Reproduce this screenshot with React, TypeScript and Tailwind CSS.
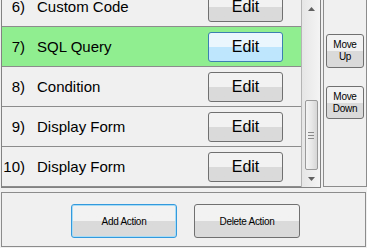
import React from 'react';

const rows = [
    {num: '6)', label: 'Custom Code'},
    {num: '7)', label: 'SQL Query', selected: true},
    {num: '8)', label: 'Condition'},
    {num: '9)', label: 'Display Form'},
    {num: '10)', label: 'Display Form'},
];

const btnBase = 'flex items-center justify-center rounded-[3px] border text-black';
const btnNormal = 'border-[#707070] bg-gradient-to-b from-[#f2f2f2] from-50% to-[#dadada] to-50%';
const btnHot = 'border-[#3c7fb1] bg-gradient-to-b from-[#eaf6fd] from-50% to-[#bee6fd] to-50%';
const btnFocus = 'border-[#3399dd] shadow-[inset_0_0_0_1px_#a8dcf5] bg-gradient-to-b from-[#f2f2f2] from-50% to-[#dadada] to-50%';

const App: React.FC = () => {
    return (
        <div className="relative w-[367px] h-[248px] overflow-hidden bg-[#f0f0f0] font-['Liberation_Sans',Arial,sans-serif]">
            <div className="flex h-[188px]">
                {/* Liste des actions */}
                <div className="ml-[1px] w-[320px] h-[188px] flex border-l border-r border-b border-[#828282] overflow-hidden">
                    <div className="w-[299px] flex flex-col -mt-[13px]">
                        {rows.map((row) => (
                            <div key={row.num}
                                 className={`h-[40px] shrink-0 flex items-center border-b border-[#8c8c8c] ${row.selected ? 'bg-[#90ee90]' : 'bg-[#f0f0f0]'}`}>
                                <span className="w-[23px] text-right text-[15px] leading-none">{row.num}</span>
                                <span className="ml-[12px] text-[15px] leading-none flex-1">{row.label}</span>
                                <div className={`${btnBase} ${row.selected ? btnHot : btnNormal} w-[75px] h-[30px] mr-[18px] text-[16px]`}>
                                    Edit
                                </div>
                            </div>
                        ))}
                    </div>
                    {/* Scrollbar */}
                    <div className="w-[19px] border-l border-[#b4b4b4] bg-gradient-to-r from-[#e6e6e6] to-[#f4f4f4] flex flex-col items-center">
                        <div className="h-[17px] flex items-center justify-center">
                            <svg width="7" height="4" viewBox="0 0 7 4"><path d="M0 4 L3.5 0 L7 4 Z" fill="#606060"/></svg>
                        </div>
                        <div className="h-[83px]"/>
                        <div className="w-[13px] h-[70px] rounded-[2px] border border-[#9a9a9a] bg-gradient-to-r from-[#f4f4f4] via-[#e8e8e8] to-[#d6d6d6] flex items-center justify-center">
                            <svg width="6" height="7" viewBox="0 0 6 7">
                                <path d="M0 0.5H6M0 3.5H6M0 6.5H6" stroke="#8a8a8a" strokeWidth="1"/>
                            </svg>
                        </div>
                        <div className="flex-1 flex items-center justify-center">
                            <svg width="7" height="4" viewBox="0 0 7 4"><path d="M0 0 L3.5 4 L7 0 Z" fill="#606060"/></svg>
                        </div>
                    </div>
                </div>
                {/* Panneau de droite */}
                <div className="ml-[2px] w-[44px] h-[187px] border-l border-r border-b border-[#8c8c8c] flex flex-col items-center">
                    <div className={`${btnBase} ${btnNormal} mt-[34px] w-[38px] h-[34px] flex-col text-[10px] leading-[12px] tracking-[-0.3px]`}>
                        <span>Move</span>
                        <span>Up</span>
                    </div>
                    <div className={`${btnBase} ${btnNormal} mt-[18px] w-[38px] h-[33px] flex-col text-[10px] leading-[12px] tracking-[-0.3px]`}>
                        <span>Move</span>
                        <span>Down</span>
                    </div>
                </div>
            </div>
            {/* Boutons du bas */}
            <div className="mt-[4px] ml-[1px] w-[365px] h-[55px] border border-[#8c8c8c] flex items-start pt-[11px]">
                <div className={`${btnBase} ${btnFocus} ml-[69px] w-[106px] h-[34px] text-[10px] tracking-[-0.3px]`}>
                    Add Action
                </div>
                <div className={`${btnBase} ${btnNormal} ml-[17px] w-[106px] h-[34px] text-[10px] tracking-[-0.3px]`}>
                    Delete Action
                </div>
            </div>
        </div>
    );
};

export default App;
